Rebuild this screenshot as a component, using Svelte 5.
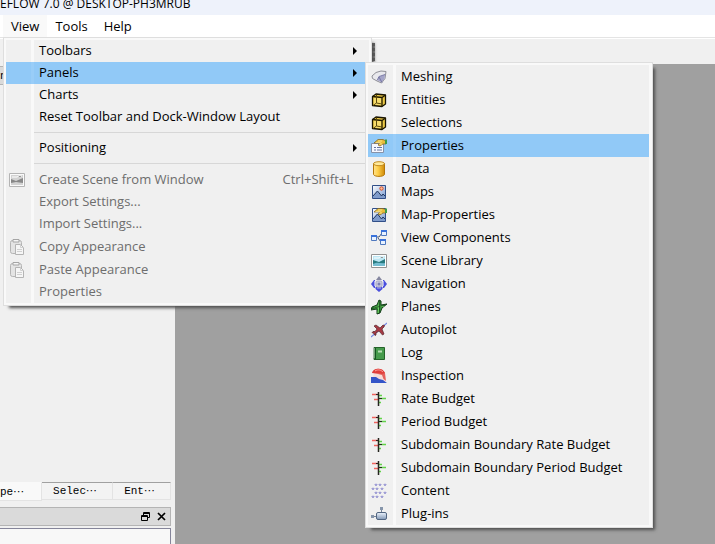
<script>
    let menus = ['View', 'Tools', 'Help'];

    let viewMenu = [
        {label: 'Toolbars', sub: true},
        {label: 'Panels', sub: true, active: true},
        {label: 'Charts', sub: true},
        {label: 'Reset Toolbar and Dock-Window Layout'},
        {separator: true},
        {label: 'Positioning', sub: true},
        {separator: true},
        {label: 'Create Scene from Window', icon: 'scene-off', keys: 'Ctrl+Shift+L', disabled: true},
        {label: 'Export Settings...', disabled: true},
        {label: 'Import Settings...', disabled: true},
        {label: 'Copy Appearance', icon: 'clipboard', disabled: true},
        {label: 'Paste Appearance', icon: 'clipboard', disabled: true},
        {label: 'Properties', disabled: true}
    ];

    let panels = [
        {label: 'Meshing', icon: 'mesh'},
        {label: 'Entities', icon: 'cube'},
        {label: 'Selections', icon: 'cube'},
        {label: 'Properties', icon: 'properties', active: true},
        {label: 'Data', icon: 'data'},
        {label: 'Maps', icon: 'map'},
        {label: 'Map-Properties', icon: 'map-properties'},
        {label: 'View Components', icon: 'components'},
        {label: 'Scene Library', icon: 'scene'},
        {label: 'Navigation', icon: 'navigation'},
        {label: 'Planes', icon: 'planes'},
        {label: 'Autopilot', icon: 'autopilot'},
        {label: 'Log', icon: 'log'},
        {label: 'Inspection', icon: 'inspection'},
        {label: 'Rate Budget', icon: 'budget'},
        {label: 'Period Budget', icon: 'budget'},
        {label: 'Subdomain Boundary Rate Budget', icon: 'budget'},
        {label: 'Subdomain Boundary Period Budget', icon: 'budget'},
        {label: 'Content', icon: 'content'},
        {label: 'Plug-ins', icon: 'plugins'}
    ];

    let tabs = ['pe⋯', 'Selec⋯', 'Ent⋯'];
    let selectedTab = $state(0);
    let stars = [[5, 2], [9, 2], [14, 2], [2, 6], [6, 6], [11, 6], [5, 10], [9, 10], [14, 10], [2, 14], [6, 14], [11, 14]];
</script>

<svelte:head>
    <title>FEFLOW 7.0</title>
</svelte:head>

{#snippet hand()}
    <path d="M3 5 7 1.5h5L15 3v3h-3l-3 2-2-1 2-2H5Z" fill="#e9bd3c" stroke="#80601a" stroke-width=".7" />
    <path d="M4.5 4.5h5M7 3h4M8 6h3" stroke="#fff0a0" stroke-width=".7" />
    <path d="M14 1.5h2V6h-2z" fill="#3d9b46" />
{/snippet}

{#snippet icon(name)}
    <svg class="icon" viewBox="0 0 16 16" aria-hidden="true">
        {#if name === 'mesh'}
            <path d="M1 7 5 3.5 10 2l5 .5-1 7-3.500 4.500L6 12 1.500 9.500Z" fill="#e9e9ed" stroke="#909097" />
            <path d="M7 8 14 5.500l-.5 4.500-3 3.500L7 11.500Z" fill="#a5a5c8" />
            <path d="m6 11.500 2-4 6-2M8 8l3 5.500" stroke="#6c6c9c" stroke-width=".8" fill="none" />
        {:else if name === 'cube'}
            <path d="M1.500 4.500 5 2l9.500 1v9L11 14.500l-9.500-1Z" fill="#ecc945" stroke="#191400" stroke-width="1.300" stroke-linejoin="round" />
            <path d="M3 6h7v7H3z" fill="#f7dc6c" />
            <path d="m1.500 4.500 9.500 1 3.500-2.500M11 5.500v9" fill="none" stroke="#201a00" stroke-width="1.300" />
            <path d="M5.500 2.500V11l5.500 1M5.500 11 2 13.500" fill="none" stroke="#5c4a0c" />
        {:else if name === 'properties'}
            <path d="M.5 5.500h12v9H.5z" fill="#f6f8ff" stroke="#8792a8" />
            <path d="M3 9.500h2m1 0h5M3 12h2m1 0h5" stroke="#6474a0" />
            {@render hand()}
        {:else if name === 'data'}
            <path d="M2.500 2.500v11c1 2.500 10 2.500 11 0v-11Z" fill="url(#gold)" stroke="#b47709" />
            <ellipse cx="8" cy="2.700" rx="5.500" ry="2" fill="#ffe99a" stroke="#c28b20" />
        {:else if name === 'map' || name === 'map-properties'}
            <path d="M1.500 1.500h13v13h-13z" fill="url(#sky)" stroke="#314f88" />
            <path d="m2 12 4-5 4 5 2-2 2 2v2H2Z" fill="#7f9bcb" />
            <path d="m2 12 4.500-5 4 5 1.500-2 2 2" fill="none" stroke="#21385f" />
            {#if name === 'map'}
                <circle cx="10.500" cy="4.500" r="1.700" fill="#ffc198" stroke="#d54b2a" />
            {:else}
                {@render hand()}
            {/if}
        {:else if name === 'components'}
            <path d="M5 7h3l3-4M7 8l3 4" fill="none" stroke="#445475" />
            <path d="M.5 5.500h5v5h-5zM10.500 .5h5v5h-5zM9.500 9.500h5v5h-5z" fill="#e8f2ff" stroke="#4f78be" />
            <path d="M0 6h6M10 1h6M9 10h6" stroke="#3972db" stroke-width="2" />
        {:else if name === 'scene'}
            <path d="M.5 1.500h15v13H.5z" fill="#fff" stroke="#929292" />
            <path d="M2 3h12v10H2z" fill="#bde7f4" />
            <path d="m2 7 3 1 3 1 6-3v7H2Z" fill="#287b80" />
            <path d="M2 11c5-3 8 0 12-1v3H2Z" fill="#75bdd1" />
            <path d="M3 5h5l2-1h3" stroke="#fff" />
        {:else if name === 'navigation'}
            <path d="m8 0 3 4H5Z" fill="#8587a0" />
            <path d="m8 16-3.500-3v-2h7v2ZM0 8l3-4h1v8H3Zm16 0-3-4h-1v8h1Z" fill="#4a4fdc" />
            <path d="M6 12h4M3.500 5v5M12.500 5v5" stroke="#a5a8f5" />
            <rect x="5" y="5" width="6" height="6" rx="1.500" fill="#c9cade" stroke="#a3a5c0" />
            <circle cx="8" cy="8" r="1.500" fill="#7d80b5" />
        {:else if name === 'planes'}
            <path d="m1 8 5-2 2-5 2 1v4l6-1-5 4-2 5-3 1V10L0 11Z" fill="#329338" stroke="#143c19" />
            <path d="M3 8.500 13 7M8.500 2 7 14" stroke="#75d568" />
            <path d="M1 9.500 14 6M8.500 1v13" stroke="#17451d" stroke-width=".8" />
        {:else if name === 'autopilot'}
            <path d="M0 15 16 1" stroke="#7385e2" stroke-width="1.200" />
            <path d="m3 4 2-1 4 3 3-3 1.500 .5-.5 1.500-2 2 2 5-1.500 1-3.500-4-3 2v2l-1 .5-1-2-2-1 1-1h2l2-2.500Z" fill="#a83a44" stroke="#55272d" stroke-width=".7" />
        {:else if name === 'log'}
            <path d="M3 2.500h10.500v12H3z" fill="#469b4c" stroke="#246329" />
            <path d="M4.500 3v11" stroke="#155422" />
            <path d="M7 5.500h4v2H7z" fill="#b8deb5" />
            <path d="M2 4h2M2 6h2M2 8h2M2 10h2M2 12h2" stroke="#b6c8b7" />
        {:else if name === 'inspection'}
            <path d="M3 5 2 9l4 3 8 2-1-8Z" fill="#f6dcd8" />
            <path d="M1 5c2-6 11-5 13 0l1 8-2.500-2-1.500-4-4-1Z" fill="#e4605c" />
            <path d="M1 5c2-6 11-5 13 0l-3 1-4-1Z" fill="#e03f3c" />
            <path d="M4 3c3-2 6-1 8 1" fill="none" stroke="#ffa19b" />
            <path d="M0 9h5l3 2 4 1 4 3H0Z" fill="#3555c8" />
        {:else if name === 'budget'}
            <path d="M1 3.500h6M3 8.500h4" stroke="#f0645f" stroke-width="1.500" />
            <path d="M8 7.500h7M8 4.500h3M8 11.500h2" stroke="#62d449" stroke-width="1.600" />
            <path d="M7.500 1v14" stroke="#25251f" stroke-width="1.500" />
            <path d="M5 3.500h3M7 7.500h4" stroke="#25251f" />
        {:else if name === 'content'}
            {#each stars as [x, y]}
                <path d="M{x - 1.5} {y - .5}h3M{x} {y - 1.5}v1m-1 1.500 1-1 1 1" fill="none" stroke="#8583cc" stroke-width=".7" />
            {/each}
        {:else if name === 'plugins'}
            <path d="M10.500 2v5M1 10.500h5" stroke="#758398" />
            <rect x="5.500" y="6.500" width="10" height="7" rx="1.500" fill="url(#steel)" stroke="#526681" />
            <path d="M9 1h3v3H9zM0 9h3v3H0z" fill="#8695aa" />
        {:else if name === 'scene-off'}
            <path d="M.5 1.500h15v13H.5z" fill="#fafafa" stroke="#b4b4b4" />
            <path d="M2 3h12v10H2z" fill="#d2d2d2" />
            <path d="m2 7 5 2 7-3v5l-7-1-5 1Z" fill="#888" />
            <path d="M3 5h5l2-1h3" stroke="#fff" />
        {:else}
            <rect x="1.500" y="1.500" width="11" height="13" rx="2" fill="#e4e4e4" stroke="#b4b4b4" />
            <path d="M4 .5h6v2.500H4z" fill="#f6f6f6" stroke="#a5a5a5" />
            <path d="M6.500 5.500h5l3 3v7h-8z" fill="#f6f6f6" stroke="#b4b4b4" />
            <path d="M11.500 5.500v3h3M8 10.500h5M8 12.500h5" fill="none" stroke="#d0d0d0" />
        {/if}
    </svg>
{/snippet}

{#snippet menuItem(item, tall)}
    {#if item.separator}
        <hr class="separator" />
    {:else}
        <button class="item" class:tall={tall || item.icon} class:active={item.active} disabled={item.disabled} role="menuitem">
            <span class="gutter">{#if item.icon}{@render icon(item.icon)}{/if}</span>
            <span class="label">{item.label}</span>
            {#if item.keys}<span class="keys">{item.keys}</span>{/if}
            {#if item.sub}<svg class="arrow" viewBox="0 0 4 8" aria-hidden="true"><path d="M0 0v8l4-4Z" /></svg>{/if}
        </button>
    {/if}
{/snippet}

<svg class="defs" aria-hidden="true">
    <defs>
        <linearGradient id="gold"><stop stop-color="#ffe391" /><stop offset=".4" stop-color="#ffd04a" /><stop offset="1" stop-color="#cf8a09" /></linearGradient>
        <linearGradient id="sky" x2="1" y2="1"><stop stop-color="#fff" /><stop offset="1" stop-color="#7598d0" /></linearGradient>
        <linearGradient id="steel" x2="0" y2="1"><stop stop-color="#edf4fd" /><stop offset="1" stop-color="#8197b5" /></linearGradient>
    </defs>
</svg>

<main class="window">
    <header class="titlebar">EFLOW 7.0 @ DESKTOP-PH3MRUB</header>
    <nav class="menubar">
        {#each menus as menu, i}
            <button class="menuButton" class:open={i === 0}>{menu}</button>
        {/each}
    </nav>
    <div class="toolbar"><span class="handle"></span></div>
    <div class="workspace">
        <aside class="dock">
            <div class="dockTitle upper">n</div>
            <div class="tabs" role="tablist">
                {#each tabs as tab, i}
                    <button class="tab" class:selected={selectedTab === i} role="tab" aria-selected={selectedTab === i} onclick={() => selectedTab = i}>{tab}</button>
                {/each}
            </div>
            <div class="dockTitle">
                <button class="dockButton" aria-label="Float">
                    <svg viewBox="0 0 9 9"><path d="M2.500 3V.5h6v5H7M2.500 1.500h6M.5 3.500h6v5h-6zM.5 4.500h6" /></svg>
                </button>
                <button class="dockButton" aria-label="Close">
                    <svg viewBox="0 0 9 9"><path class="cross" d="m1 1 7 7M8 1 1 8" /></svg>
                </button>
            </div>
            <div class="dockBody"></div>
        </aside>
    </div>

    <div class="menu viewMenu" role="menu">
        {#each viewMenu as item}
            {@render menuItem(item, false)}
        {/each}
    </div>
    <div class="menu panelMenu" role="menu">
        {#each panels as item}
            {@render menuItem(item, true)}
        {/each}
    </div>
</main>

<style>
    :global(body) {
        overflow: hidden;
    }
    .window {
        position: relative;
        display: flex;
        flex-direction: column;
        height: 100vh;
        overflow: hidden;
        background: #f0f0f0;
        color: #000;
        font-family: 'Open Sans', 'Noto Sans', sans-serif;
        font-size: 13px;
    }
    .window button {
        border: none;
        color: inherit;
        font-family: inherit;
        font-size: inherit;
    }
    .defs {
        position: absolute;
        width: 0;
        height: 0;
    }
    .titlebar {
        display: flex;
        flex-direction: column;
        justify-content: flex-end;
        height: 15px;
        padding-bottom: 1px;
        box-sizing: border-box;
        background: #eef2fb;
        font-size: 12px;
        line-height: 20px;
        white-space: nowrap;
    }
    .menubar {
        display: flex;
        height: 22px;
        padding-left: 3px;
        background: #fff;
    }
    .menuButton {
        padding: 0 8px;
        background: transparent;
        line-height: 20px;
    }
    .menuButton.open {
        background: #f9f9f9;
    }
    .toolbar {
        height: 27px;
        padding: 5px 0 0 371px;
        border-top: 1px solid #e4e4e4;
        box-sizing: border-box;
        box-shadow: inset 0 1px #fff;
    }
    .handle {
        display: block;
        width: 4px;
        height: 18px;
        background: repeating-linear-gradient(#606060 0 3px, #909090 3px 5px);
    }
    .workspace {
        flex: 1;
        display: flex;
        background: #a0a0a0;
    }
    .dock {
        display: flex;
        flex-direction: column;
        width: 171px;
        padding-right: 4px;
        background: #f0f0f0;
    }
    .tabs {
        display: flex;
        height: 19px;
        margin: auto 0 6px;
    }
    .window .tab {
        flex: 1 1 auto;
        height: 18px;
        padding: 0 4px 0 0;
        border-top: 1px solid #a0a0a0;
        border-right: 1px solid #e3e3e3;
        border-bottom: 1px solid #e3e3e3;
        background: #f3f3f3;
        font-family: 'Liberation Mono', 'DejaVu Sans', monospace;
        font-size: 11px;
        line-height: 16px;
    }
    .window .tab.selected {
        flex: 0 0 42px;
        height: 19px;
        border-top-color: #f9f9f9;
        background: #f9f9f9;
        text-align: left;
    }
    .dockTitle {
        display: flex;
        justify-content: flex-end;
        align-items: center;
        gap: 7px;
        height: 19px;
        padding-right: 4px;
        box-sizing: border-box;
        border: 1px solid #b4b4b4;
        border-left: none;
        background: #dadada;
    }
    .dockTitle.upper {
        justify-content: flex-start;
        margin-top: 2px;
        font-family: 'Liberation Mono', monospace;
        font-size: 11px;
    }
    .dockButton {
        display: flex;
        padding: 0;
        background: transparent;
    }
    .dockButton svg {
        width: 9px;
        height: 9px;
        fill: none;
        stroke: #000;
    }
    .cross {
        stroke-width: 1.7;
    }
    .dockBody {
        height: 15px;
        margin-top: 2px;
        border-top: 1px solid #85859a;
        border-right: 1px solid #85859a;
        background: #f8f8f8;
    }
    .menu {
        position: absolute;
        box-sizing: border-box;
        border: 1px solid #dedede;
        padding: 2px;
        background: #f9f9f9;
        box-shadow: 4px 4px 3px -2px #505050;
    }
    .viewMenu {
        left: 3px;
        top: 37px;
        width: 369px;
    }
    .panelMenu {
        left: 365px;
        top: 62px;
        width: 288px;
        padding-right: 3px;
    }
    .item {
        display: flex;
        align-items: center;
        width: 100%;
        height: 22px;
        padding: 0 12px 0 0;
        background: linear-gradient(90deg, #f0f0f0 25px, #f9f9f9 25px 28px, #f0f0f0 28px);
        line-height: 20px;
        text-align: left;
    }
    .item.tall {
        height: 23px;
    }
    .item.active {
        background: linear-gradient(90deg, #91c9f7 25px, #99cdf8 25px 28px, #91c9f7 28px);
    }
    .window .item:disabled {
        color: #6d6d6d;
    }
    .gutter {
        display: flex;
        width: 25px;
        padding: 0 5px 0 3px;
        box-sizing: border-box;
        margin-right: 8px;
    }
    .icon {
        width: 16px;
        height: 16px;
    }
    .label {
        flex: 1;
        padding-bottom: 2px;
        white-space: nowrap;
    }
    .keys {
        padding: 0 4px 2px 0;
    }
    .arrow {
        width: 4px;
        height: 8px;
    }
    .separator {
        height: 9px;
        margin: 0;
        border: none;
        background:
            linear-gradient(#d7d7d7, #d7d7d7) 28px 4px / 100% 1px no-repeat,
            linear-gradient(90deg, #f0f0f0 25px, #f9f9f9 25px 28px, #f0f0f0 28px);
    }
</style>
